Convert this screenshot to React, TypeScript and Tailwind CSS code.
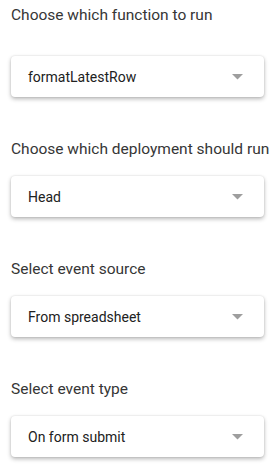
import React from "react";

const items = [
  { label: "Choose which function to run", value: "formatLatestRow", gap: "mt-[29px]" },
  { label: "Choose which deployment should run", value: "Head", gap: "mt-[15px]" },
  { label: "Select event source", value: "From spreadsheet", gap: "mt-[15px]" },
  { label: "Select event type", value: "On form submit", gap: "mt-[15px]" },
];

function Select({ value }: { value: string }) {
  return (
    <div className="h-[41px] w-[253px] rounded-[4px] bg-white flex items-center justify-between pl-[17px] pr-[21px] shadow-[0_2px_4px_rgba(0,0,0,0.28),0_0_2px_rgba(0,0,0,0.12)]">
      <span className="text-[14px] leading-[20px] text-[#212121]">{value}</span>
      <svg width="11" height="6" viewBox="0 0 11 6" className="mt-[1px]">
        <polygon points="0,0 11,0 5.5,5.5" fill="#9e9e9e" />
      </svg>
    </div>
  );
}

export default function App() {
  return (
    <div
      className="w-[280px] h-[471px] bg-white pt-[3px] pl-[11px] flex flex-col"
      style={{ fontFamily: "Roboto, 'Noto Sans', sans-serif" }}
    >
      {items.map((it, i) => (
        <div key={i} className={i === 0 ? "" : "mt-[40px]"}>
          <div className="text-[15.5px] leading-[24px] text-[#363636] whitespace-nowrap">{it.label}</div>
          <div className={it.gap}>
            <Select value={it.value} />
          </div>
        </div>
      ))}
    </div>
  );
}
